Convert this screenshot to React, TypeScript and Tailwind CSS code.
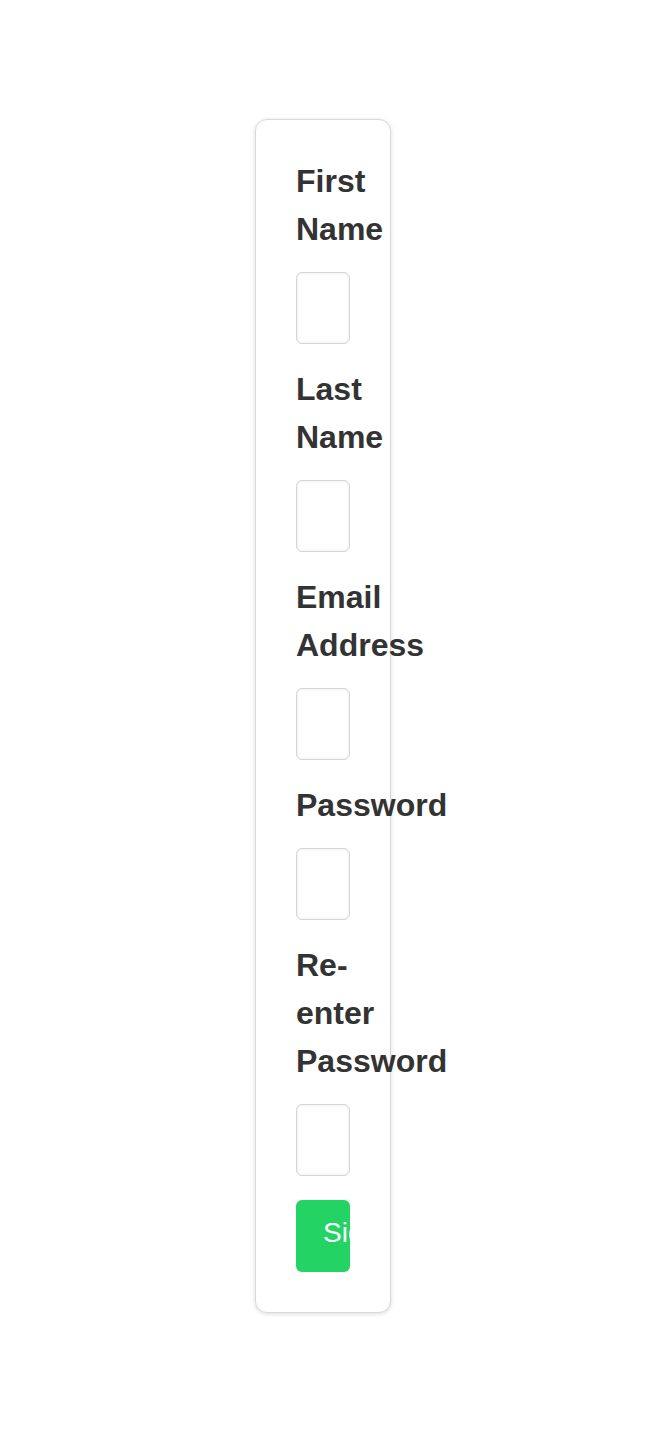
import React from 'react';

const fields = [
  { id: 'firstName', label: 'First Name', type: 'text' },
  { id: 'lastName', label: 'Last Name', type: 'text' },
  { id: 'email', label: 'Email Address', type: 'email' },
  { id: 'password', label: 'Password', type: 'password' },
  { id: 'confirm', label: 'Re-enter Password', type: 'password' },
];

export default function App() {
  return (
    <div className="min-h-[1432px] bg-white flex justify-center pt-[119px] font-['Liberation_Sans',Arial,sans-serif]">
      <form
        className="w-[136px] h-fit bg-white border border-[#d9d9d9] rounded-[12px] shadow-[0_1px_4px_rgba(0,0,0,0.14)] pt-[37px] pb-[40px] px-[40px] flex flex-col"
        onSubmit={(e) => e.preventDefault()}
      >
        <div className="flex flex-col gap-[21px]">
          {fields.map((f) => (
            <div key={f.id} className="flex flex-col">
              <label htmlFor={f.id} className="block text-[32px] leading-[48px] font-bold text-[#333333] whitespace-normal">
                {f.label}
              </label>
              <input
                id={f.id}
                type={f.type}
                className="mt-[19px] w-[54px] h-[72px] border border-[#d6d6d6] rounded-[6px] shadow-[inset_0_0_3px_rgba(0,0,0,0.1)] bg-white outline-none"
              />
            </div>
          ))}
        </div>
        <button
          type="submit"
          className="mt-[24px] w-[54px] h-[72px] bg-[#23d364] rounded-[6px] overflow-hidden text-white text-[28px] leading-[32px] whitespace-nowrap text-left pl-[27px] pt-[17px] pb-[23px]"
        >
          Sign Up
        </button>
      </form>
    </div>
  );
}
